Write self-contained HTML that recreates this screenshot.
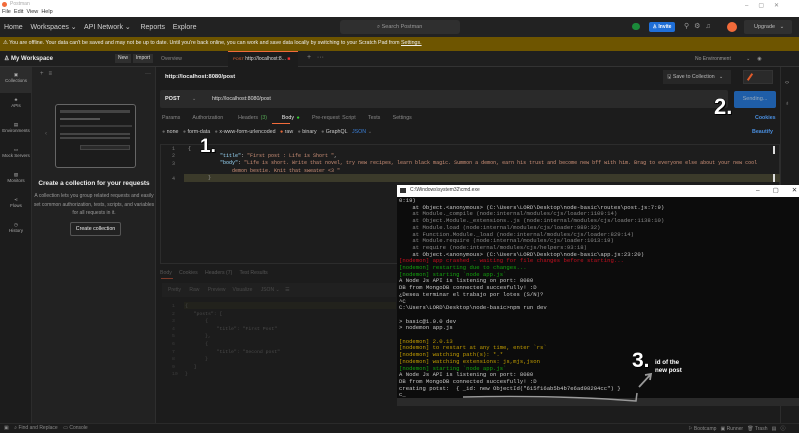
<!DOCTYPE html>
<html><head><meta charset="utf-8"><style>
*{margin:0;padding:0;box-sizing:border-box}
body{width:799px;height:433px;overflow:hidden;background:#1c1c1c;font-family:"Liberation Sans",sans-serif;position:relative;color:#ccc}
.a{position:absolute;white-space:nowrap}
.m{font-family:"Liberation Mono",monospace}
.big{font-family:"Liberation Sans",sans-serif;font-weight:bold;color:#fff;-webkit-text-stroke:1px #000;paint-order:stroke fill;text-shadow:1px 1px 0 #000}
.t{font-size:5.6px;line-height:6.7px;font-family:"Liberation Mono",monospace;color:#c8c8c8}
</style></head><body>
<!-- top white -->
<div class="a" style="left:0;top:0;width:799px;height:17px;background:#fff"></div>
<div class="a" style="left:2px;top:2px;width:5px;height:5px;border-radius:50%;background:#f26b3a"></div>
<div class="a" style="left:10px;top:1px;font-size:5px;color:#aaa">Postman</div>
<div class="a" style="left:2px;top:9px;font-size:5.5px;color:#333">File&nbsp; Edit&nbsp; View&nbsp; Help</div>
<div class="a" style="left:745px;top:2px;font-size:6px;color:#888;letter-spacing:10px">–▢✕</div>
<!-- header -->
<div class="a" style="left:0;top:17px;width:799px;height:20px;background:#222"></div>
<div class="a" style="left:4px;top:23px;font-size:7px;color:#d0d0d0">Home&nbsp;&nbsp;&nbsp; Workspaces ⌄&nbsp;&nbsp;&nbsp; API Network ⌄&nbsp;&nbsp;&nbsp;&nbsp; Reports&nbsp;&nbsp;&nbsp; Explore</div>
<div class="a" style="left:340px;top:20px;width:120px;height:14px;background:#2f2f2f;border-radius:3px"></div>
<div class="a" style="left:377px;top:24px;font-size:5.5px;color:#999">⌕ Search Postman</div>
<div class="a" style="left:632px;top:23px;width:8px;height:7px;background:#1b8a3a;border-radius:4px"></div>
<div class="a" style="left:649px;top:22px;width:26px;height:10px;background:#1f6fd8;border-radius:2px;font-size:5px;color:#fff;text-align:center;line-height:10px;font-weight:bold">♙ Invite</div>
<div class="a" style="left:684px;top:22px;font-size:7px;color:#999;letter-spacing:5px">⚲⚙♫</div>
<div class="a" style="left:727px;top:22px;width:10px;height:10px;border-radius:50%;background:#f26b3a"></div>
<div class="a" style="left:744px;top:20px;width:48px;height:14px;background:#303030;border-radius:2px;font-size:5.5px;color:#bbb;line-height:14px;padding-left:10px">Upgrade&nbsp;&nbsp; ⌄</div>
<!-- banner -->
<div class="a" style="left:0;top:37px;width:799px;height:14px;background:#6e5500"></div>
<div class="a" style="left:3px;top:40px;font-size:5.3px;color:#eee">⚠ You are offline. Your data can't be saved and may not be up to date. Until you're back online, you can work and save data locally by switching to your Scratch Pad from <u>Settings.</u></div>
<!-- workspace row -->
<div class="a" style="left:0;top:51px;width:799px;height:16px;background:#1f1f1f;border-bottom:1px solid #333"></div>
<div class="a" style="left:4px;top:55px;font-size:6px;color:#eee;font-weight:bold">♙ My Workspace</div>
<div class="a" style="left:115px;top:54px;width:16px;height:9px;background:#2f2f2f;font-size:5px;color:#ddd;text-align:center;line-height:9px">New</div>
<div class="a" style="left:133px;top:54px;width:20px;height:9px;background:#2f2f2f;font-size:5px;color:#ddd;text-align:center;line-height:9px">Import</div>
<div class="a" style="left:161px;top:56px;font-size:5px;color:#888">Overview</div>
<div class="a" style="left:228px;top:51px;width:70px;height:16px;background:#1c1c1c;border-top:1px solid #f26b3a"></div>
<div class="a" style="left:233px;top:56px;font-size:5px;color:#ddd"><span style="color:#f26b3a;font-size:4px">POST</span> http://localhost:8... <span style="color:#e33">■</span></div>
<div class="a" style="left:307px;top:54px;font-size:7px;color:#888">+&nbsp;&nbsp; ···</div>
<div class="a" style="left:695px;top:56px;font-size:5px;color:#999">No Environment&nbsp;&nbsp;&nbsp;&nbsp;&nbsp;&nbsp;&nbsp;&nbsp;&nbsp;&nbsp; ⌄&nbsp;&nbsp;&nbsp;&nbsp; ◉</div>
<!-- left rail -->
<div class="a" style="left:0;top:67px;width:32px;height:356px;background:#1c1c1c;border-right:1px solid #2c2c2c"></div>
<div class="a" style="left:0;top:67px;width:32px;height:26px;background:#2c2c2c"></div>
<div class="a" style="left:0;top:72px;width:32px;font-size:4.5px;color:#aaa;text-align:center;line-height:25px;white-space:normal">
<div style="line-height:6px">▣<br>Collections</div><div style="line-height:6px;margin-top:13px">♣<br>APIs</div><div style="line-height:6px;margin-top:13px">▤<br>Environments</div><div style="line-height:6px;margin-top:13px">▭<br>Mock Servers</div><div style="line-height:6px;margin-top:13px">▧<br>Monitors</div><div style="line-height:6px;margin-top:13px">⋖<br>Flows</div><div style="line-height:6px;margin-top:13px">◷<br>History</div></div>
<!-- sidebar -->
<div class="a" style="left:32px;top:67px;width:124px;height:356px;background:#222;border-right:1px solid #2e2e2e"></div>
<div class="a" style="left:40px;top:71px;font-size:6px;color:#888">+&nbsp;&nbsp; ≡</div>
<div class="a" style="left:145px;top:71px;font-size:6px;color:#888">···</div>
<div class="a" style="left:55px;top:104px;width:81px;height:64px;border:1px solid #666;border-radius:3px;background:#1c1c1c"></div>
<div class="a" style="left:60px;top:110px;width:70px;height:3px;background:#444"></div>
<div class="a" style="left:60px;top:118px;width:40px;height:2px;background:#555"></div>
<div class="a" style="left:60px;top:125px;width:72px;height:2px;background:#3a3a3a"></div>
<div class="a" style="left:60px;top:133px;width:70px;height:2px;background:#444"></div>
<div class="a" style="left:60px;top:137px;width:70px;height:2px;background:#444"></div>
<div class="a" style="left:80px;top:145px;width:50px;height:5px;background:#2a2a2a;border:1px solid #444"></div>
<div class="a" style="left:45px;top:131px;font-size:6px;color:#666">‹</div>
<div class="a" style="left:32px;top:180px;width:124px;text-align:center;font-size:6.4px;color:#eee;font-weight:bold">Create a collection for your requests</div>
<div class="a" style="left:32px;top:192px;width:124px;text-align:center;font-size:5px;color:#999;line-height:8.6px;white-space:normal">A collection lets you group related requests and easily set common authorization, tests, scripts, and variables for all requests in it.</div>
<div class="a" style="left:70px;top:222px;width:51px;height:14px;border:1px solid #555;border-radius:2px;font-size:5.3px;color:#eee;text-align:center;line-height:12px">Create collection</div>
<!-- main -->
<div class="a" style="left:165px;top:74px;font-size:5.8px;color:#eee;font-weight:bold">http://localhost:8080/post</div>
<div class="a" style="left:663px;top:70px;width:68px;height:14px;background:#272727;font-size:5.2px;color:#bbb;line-height:14px;padding-left:4px">🖫 Save to Collection&nbsp;&nbsp; ⌄</div>
<div class="a" style="left:743px;top:70px;width:30px;height:14px;background:#2a2a2a;border:1px solid #333"></div>
<div class="a" style="left:749px;top:73px;width:2px;height:8px;background:#e05a2a;transform:rotate(35deg)"></div>
<div class="a" style="left:780px;top:67px;width:19px;height:356px;background:#1c1c1c;border-left:1px solid #2c2c2c"></div>
<div class="a" style="left:785px;top:73px;font-size:6px;color:#999;line-height:21px">‹›<br>♁</div>
<div class="a" style="left:160px;top:90px;width:568px;height:18px;background:#2a2a2a;border-radius:2px"></div>
<div class="a" style="left:165px;top:96px;font-size:5.5px;color:#eee;font-weight:bold">POST</div>
<div class="a" style="left:192px;top:96px;font-size:5px;color:#888">⌄</div>
<div class="a" style="left:212px;top:96px;font-size:5.3px;color:#ddd">http://localhost:8080/post</div>
<div class="a" style="left:734px;top:91px;width:42px;height:17px;background:#1f5ea8;border-radius:2px;font-size:5.5px;color:#9ab;text-align:center;line-height:17px">Sending...</div>
<div class="a big" style="left:714px;top:95px;font-size:22px;line-height:24px">2.</div>
<div class="a" style="left:162px;top:115px;font-size:5.3px;color:#888;word-spacing:1px">Params&nbsp;&nbsp;&nbsp;&nbsp; Authorization&nbsp;&nbsp;&nbsp;&nbsp;&nbsp; Headers <span style="color:#5a5">(3)</span>&nbsp;&nbsp;&nbsp;&nbsp;&nbsp; <span style="color:#eee">Body <span style="color:#3c3">●</span></span>&nbsp;&nbsp;&nbsp;&nbsp; Pre-request Script&nbsp;&nbsp;&nbsp;&nbsp; Tests&nbsp;&nbsp;&nbsp;&nbsp; Settings</div>
<div class="a" style="left:272px;top:123px;width:18px;height:1px;background:#f26b3a"></div>
<div class="a" style="left:755px;top:115px;font-size:5.3px;color:#4a8fe0;font-weight:bold">Cookies</div>
<div class="a" style="left:162px;top:129px;font-size:5.3px;color:#ccc"><span style="color:#666">●</span> none&nbsp;&nbsp; <span style="color:#666">●</span> form-data&nbsp;&nbsp; <span style="color:#666">●</span> x-www-form-urlencoded&nbsp;&nbsp; <span style="color:#e5683a">●</span> raw&nbsp;&nbsp; <span style="color:#666">●</span> binary&nbsp;&nbsp; <span style="color:#666">●</span> GraphQL&nbsp;&nbsp; <span style="color:#3a7fd8">JSON</span> <span style="color:#666">⌄</span></div>
<div class="a" style="left:752px;top:129px;font-size:5.3px;color:#4a8fe0;font-weight:bold">Beautify</div>
<!-- editor -->
<div class="a" style="left:160px;top:144px;width:620px;height:120px;border:1px solid #2c2c2c;background:#1d1d1d"></div>
<div class="a" style="left:184px;top:174px;width:596px;height:8px;background:#3b3a2a"></div>
<div class="a m" style="left:172px;top:146px;font-size:5px;color:#777;line-height:7.4px">1<br>2<br>3<br><br>4</div>
<div class="a m" style="left:188px;top:146px;font-size:5px;color:#999">{</div>
<div class="a m" style="left:220px;top:153px;font-size:5px;color:#ccc;line-height:7.4px"><span style="color:#9cdcfe">"title"</span>: <span style="color:#ce9178">"First post : Life is Short "</span>,<br><span style="color:#9cdcfe">"body"</span>: <span style="color:#ce9178">"Life is short. Write that novel, try new recipes, learn black magic. Summon a demon, earn his trust and become new bff with him. Brag to everyone else about your new cool</span><br><span style="color:#ce9178">&nbsp;&nbsp;&nbsp;&nbsp;demon bestie. Knit that sweater &lt;3 "</span></div>
<div class="a m" style="left:208px;top:175px;font-size:5px;color:#999">}</div>
<div class="a big" style="left:200px;top:137px;font-size:19px;line-height:20px">1.</div>
<div class="a" style="left:773px;top:146px;width:2px;height:8px;background:#ddd"></div>
<div class="a" style="left:773px;top:174px;width:2px;height:8px;background:#ddd"></div>
<!-- response (dim) -->
<div class="a" style="left:160px;top:270px;font-size:5.2px;color:#555">Body&nbsp;&nbsp;&nbsp;&nbsp; Cookies&nbsp;&nbsp;&nbsp;&nbsp; Headers (7)&nbsp;&nbsp;&nbsp;&nbsp; Test Results</div>
<div class="a" style="left:161px;top:278px;width:12px;height:1px;background:#7a3a2a"></div>
<div class="a" style="left:162px;top:283px;width:234px;height:14px;background:#202020"></div>
<div class="a" style="left:168px;top:287px;font-size:5px;color:#4a4a4a">Pretty&nbsp;&nbsp;&nbsp;&nbsp;&nbsp; Raw&nbsp;&nbsp;&nbsp;&nbsp;&nbsp; Preview&nbsp;&nbsp;&nbsp;&nbsp; Visualize&nbsp;&nbsp;&nbsp;&nbsp;&nbsp; JSON ⌄&nbsp;&nbsp;&nbsp; ☰</div>
<div class="a" style="left:184px;top:302px;width:212px;height:7px;background:#22221c"></div>
<div class="a m" style="left:172px;top:303px;font-size:4.8px;color:#3c3c3c;line-height:7.6px">1<br>2<br>3<br>4<br>5<br>6<br>7<br>8<br>9<br>10</div>
<div class="a m" style="left:185px;top:303px;font-size:4.8px;color:#4a4a4a;line-height:7.6px">{<br>&nbsp;&nbsp;&nbsp;"posts": [<br>&nbsp;&nbsp;&nbsp;&nbsp;&nbsp;&nbsp;&nbsp;{<br>&nbsp;&nbsp;&nbsp;&nbsp;&nbsp;&nbsp;&nbsp;&nbsp;&nbsp;&nbsp;&nbsp;"title": "First Post"<br>&nbsp;&nbsp;&nbsp;&nbsp;&nbsp;&nbsp;&nbsp;},<br>&nbsp;&nbsp;&nbsp;&nbsp;&nbsp;&nbsp;&nbsp;{<br>&nbsp;&nbsp;&nbsp;&nbsp;&nbsp;&nbsp;&nbsp;&nbsp;&nbsp;&nbsp;&nbsp;"title": "Second post"<br>&nbsp;&nbsp;&nbsp;&nbsp;&nbsp;&nbsp;&nbsp;}<br>&nbsp;&nbsp;&nbsp;]<br>}</div>
<!-- cmd window -->
<div class="a" style="left:397px;top:185px;width:402px;height:12px;background:#fff"></div>
<div class="a" style="left:400px;top:188px;width:6px;height:5px;background:#333"></div>
<div class="a" style="left:410px;top:187px;font-size:5px;color:#333">C:\Windows\system32\cmd.exe</div>
<div class="a" style="left:756px;top:186px;font-size:6.5px;color:#333;letter-spacing:13px">–▢✕</div>
<div class="a" style="left:397px;top:197px;width:402px;height:201px;background:#0c0c0c"></div>
<div class="a" style="left:397px;top:398px;width:402px;height:8px;background:#2a2a2a"></div>
<div class="a t" style="left:399px;top:198px">0:19)<br>
&nbsp;&nbsp;&nbsp;&nbsp;at Object.&lt;anonymous&gt; (C:\Users\LORD\Desktop\node-basic\routes\post.js:7:9)<br>
<span style="color:#888">&nbsp;&nbsp;&nbsp;&nbsp;at Module._compile (node:internal/modules/cjs/loader:1109:14)<br>
&nbsp;&nbsp;&nbsp;&nbsp;at Object.Module._extensions..js (node:internal/modules/cjs/loader:1138:10)<br>
&nbsp;&nbsp;&nbsp;&nbsp;at Module.load (node:internal/modules/cjs/loader:989:32)<br>
&nbsp;&nbsp;&nbsp;&nbsp;at Function.Module._load (node:internal/modules/cjs/loader:829:14)<br>
&nbsp;&nbsp;&nbsp;&nbsp;at Module.require (node:internal/modules/cjs/loader:1013:19)<br>
&nbsp;&nbsp;&nbsp;&nbsp;at require (node:internal/modules/cjs/helpers:93:18)</span><br>
&nbsp;&nbsp;&nbsp;&nbsp;at Object.&lt;anonymous&gt; (C:\Users\LORD\Desktop\node-basic\app.js:23:20)<br>
<span style="color:#c50f1f">[nodemon] app crashed - waiting for file changes before starting...</span><br>
<span style="color:#13a10e">[nodemon] restarting due to changes...<br>[nodemon] starting `node app.js`</span><br>
A Node Js API is listening on port: 8080<br>
DB from MongoDB connected succesfully! :D<br>
¿Desea terminar el trabajo por lotes (S/N)?<br>
^C<br>
C:\Users\LORD\Desktop\node-basic&gt;npm run dev<br><br>
&gt; basic@1.0.0 dev<br>
&gt; nodemon app.js<br><br>
<span style="color:#c19c00">[nodemon] 2.0.13<br>[nodemon] to restart at any time, enter `rs`<br>[nodemon] watching path(s): *.*<br>[nodemon] watching extensions: js,mjs,json</span><br>
<span style="color:#13a10e">[nodemon] starting `node app.js`</span><br>
A Node Js API is listening on port: 8080<br>
DB from MongoDB connected succesfully! :D<br>
creating potst:&nbsp; { _id: new ObjectId("615f16ab5b4b7e6ad98204cc") }<br>
c_</div>
<div class="a big" style="left:632px;top:350px;font-size:21px;line-height:22px">3.</div>
<div class="a" style="left:655px;top:359px;font-size:6.2px;color:#fff;font-weight:bold;line-height:7.5px">id of the<br>new post</div>
<svg class="a" style="left:0;top:0" width="799" height="433"><path d="M463 397 Q560 395 636 401 L637 393" stroke="#999" stroke-width="1.5" fill="none"/><path d="M639 387 L651 374 M645 375 L651 374 L650 380" stroke="#999" stroke-width="1.8" fill="none"/></svg>
<!-- status -->
<div class="a" style="left:0;top:423px;width:799px;height:10px;background:#1c1c1c;border-top:1px solid #2a2a2a"></div>
<div class="a" style="left:4px;top:425px;font-size:5px;color:#888">▣&nbsp;&nbsp;&nbsp; ⌕ Find and Replace&nbsp;&nbsp;&nbsp; ▭ Console</div>
<div class="a" style="left:688px;top:425px;font-size:5px;color:#888">⚐ Bootcamp&nbsp;&nbsp; ▣ Runner&nbsp;&nbsp; 🗑 Trash&nbsp;&nbsp; ▤&nbsp;&nbsp; ⓘ</div>
</body></html>
